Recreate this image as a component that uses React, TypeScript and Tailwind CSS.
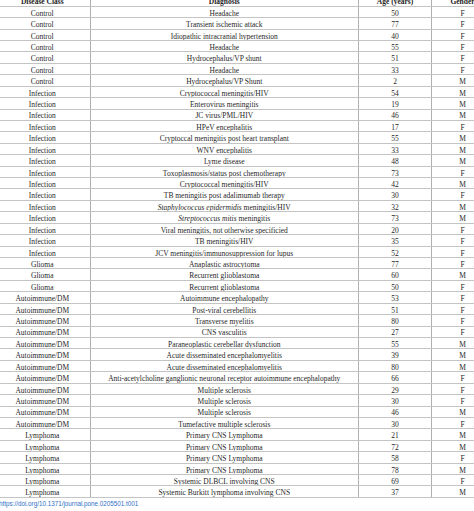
import React from "react";

type Row = [string, React.ReactNode, string, string];

const rows: Row[] = [
  ["Control", "Headache", "50", "F"],
  ["Control", "Transient ischemic attack", "77", "F"],
  ["Control", "Idiopathic intracranial hypertension", "40", "F"],
  ["Control", "Headache", "55", "F"],
  ["Control", "Hydrocephalus/VP shunt", "51", "F"],
  ["Control", "Headache", "33", "F"],
  ["Control", "Hydrocephalus/VP Shunt", "2", "M"],
  ["Infection", "Cryptococcal meningitis/HIV", "54", "M"],
  ["Infection", "Enterovirus meningitis", "19", "M"],
  ["Infection", "JC virus/PML/HIV", "46", "M"],
  ["Infection", "HPeV encephalitis", "17", "F"],
  ["Infection", "Cryptoccal meningitis post heart transplant", "55", "M"],
  ["Infection", "WNV encephalitis", "33", "M"],
  ["Infection", "Lyme disease", "48", "M"],
  ["Infection", "Toxoplasmosis/status post chemotherapy", "73", "F"],
  ["Infection", "Cryptococcal meningitis/HIV", "42", "M"],
  ["Infection", "TB meningitis post adalimumab therapy", "30", "F"],
  [
    "Infection",
    <>
      <i>Staphylococcus epidermidis</i> meningitis/HIV
    </>,
    "32",
    "M",
  ],
  [
    "Infection",
    <>
      <i>Streptococcus mitis</i> meningitis
    </>,
    "73",
    "M",
  ],
  ["Infection", "Viral meningitis, not otherwise specificied", "20", "F"],
  ["Infection", "TB meningitis/HIV", "35", "F"],
  ["Infection", "JCV meningitis/immunosuppression for lupus", "52", "F"],
  ["Glioma", "Anaplastic astrocytoma", "77", "F"],
  ["Glioma", "Recurrent glioblastoma", "60", "M"],
  ["Glioma", "Recurrent glioblastoma", "50", "F"],
  ["Autoimmune/DM", "Autoimmune encephalopathy", "53", "F"],
  ["Autoimmune/DM", "Post-viral cerebellitis", "51", "F"],
  ["Autoimmune/DM", "Transverse myelitis", "80", "F"],
  ["Autoimmune/DM", "CNS vasculitis", "27", "F"],
  ["Autoimmune/DM", "Paraneoplastic cerebellar dysfunction", "55", "M"],
  ["Autoimmune/DM", "Acute disseminated encephalomyelitis", "39", "M"],
  ["Autoimmune/DM", "Acute disseminated encephalomyelitis", "80", "M"],
  [
    "Autoimmune/DM",
    "Anti-acetylcholine ganglionic neuronal receptor autoimmune encephalopathy",
    "66",
    "F",
  ],
  ["Autoimmune/DM", "Multiple sclerosis", "29", "F"],
  ["Autoimmune/DM", "Multiple sclerosis", "30", "F"],
  ["Autoimmune/DM", "Multiple sclerosis", "46", "M"],
  ["Autoimmune/DM", "Tumefactive multiple sclerosis", "30", "F"],
  ["Lymphoma", "Primary CNS Lymphoma", "21", "M"],
  ["Lymphoma", "Primary CNS Lymphoma", "72", "M"],
  ["Lymphoma", "Primary CNS Lymphoma", "58", "F"],
  ["Lymphoma", "Primary CNS Lymphoma", "78", "M"],
  ["Lymphoma", "Systemic DLBCL involving CNS", "69", "F"],
  ["Lymphoma", "Systemic Burkitt lymphoma involving CNS", "37", "M"],
];

const cell =
  "flex items-end justify-center whitespace-nowrap overflow-hidden leading-none";

export default function App() {
  return (
    <div className="w-[474px] h-[511px] overflow-hidden bg-white text-[#1f1f1f] [font-family:'Liberation_Serif',serif] text-[7.5px]">
      <div className="ml-[-5px] -mt-[4.7px] w-[498px]">
        <div className="grid grid-cols-[95.5px_268.5px_73px_61px] h-[11.43px] border-b border-[#c4c4c4] font-bold">
          <div className={`${cell} border-r border-[#b0b0b0]`}>Disease Class</div>
          <div className={`${cell} border-r border-[#b0b0b0]`}>Diagnosis</div>
          <div className={`${cell} border-r border-[#b0b0b0]`}>Age (years)</div>
          <div className={cell}>Gender</div>
        </div>
        {rows.map((r, i) => (
          <div
            key={i}
            className="grid grid-cols-[95.5px_268.5px_73px_61px] h-[11.43px] border-b border-[#c4c4c4]"
          >
            <div className={`${cell} border-r border-[#b0b0b0]`}>{r[0]}</div>
            <div className={`${cell} border-r border-[#b0b0b0]`}>
              <span>{r[1]}</span>
            </div>
            <div className={`${cell} border-r border-[#b0b0b0]`}>{r[2]}</div>
            <div className={cell}>{r[3]}</div>
          </div>
        ))}
      </div>
      <div className="mt-[3px] ml-[-1px] text-[6.3px] leading-none text-[#2f6fc6] [font-family:'Liberation_Sans',sans-serif]">
        https://doi.org/10.1371/journal.pone.0205501.t001
      </div>
    </div>
  );
}
